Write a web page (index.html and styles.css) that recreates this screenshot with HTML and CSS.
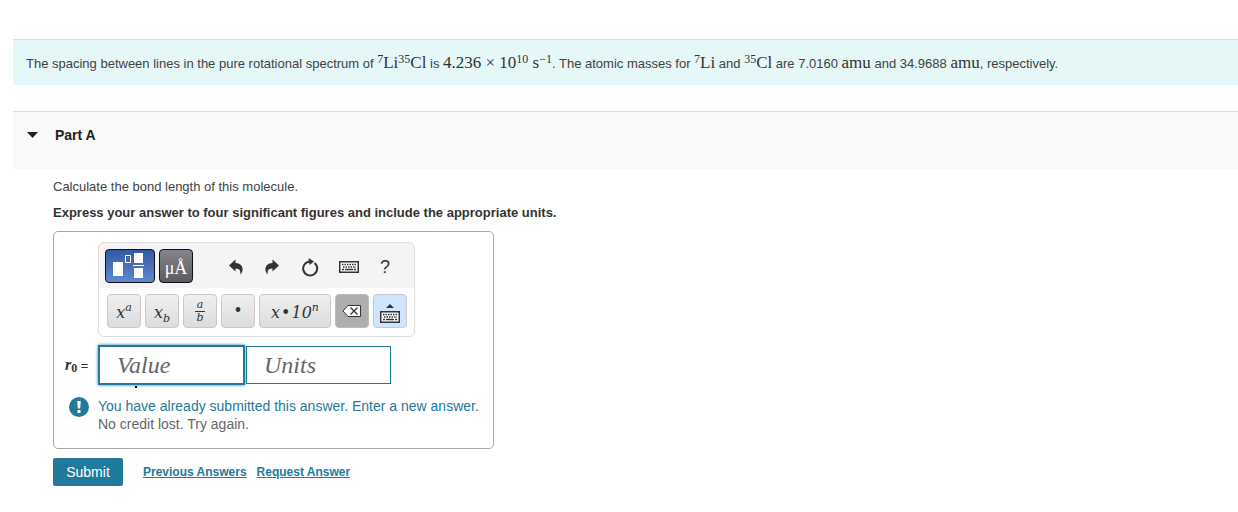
FILE: index.html
```html
<!DOCTYPE html>
<html lang="en">
<head>
<meta charset="utf-8">
<meta name="viewport" content="width=device-width, initial-scale=1">
<title>Part A</title>
<link rel="stylesheet" href="styles.css">
</head>
<body>
<main class="page">
  <p class="intro">The spacing between lines in the pure rotational spectrum of <span class="math"><sup>7</sup>Li<sup>35</sup>Cl</span> is <span class="math">4.236 × 10<sup>10</sup> s<sup>−1</sup></span>. The atomic masses for <span class="math"><sup>7</sup>Li</span> and <span class="math"><sup>35</sup>Cl</span> are 7.0160 <span class="math">amu</span> and 34.9688 <span class="math">amu</span>, respectively.</p>

  <section>
    <h2 class="part-head">
      <button class="part-toggle" type="button" aria-expanded="true">
        <svg class="caret" viewBox="0 0 11 6" aria-hidden="true"><path d="M0 0h11L5.500 6z"/></svg>
        Part A
      </button>
    </h2>

    <form class="part-body">
      <p class="prompt">Calculate the bond length of this molecule.</p>
      <p class="prompt prompt-strong">Express your answer to four significant figures and include the appropriate units.</p>

      <div class="answer">
        <div class="toolbar">
          <div class="tools tools-top">
            <button class="mode mode-active" type="button" aria-label="Templates">
              <svg width="48" height="32" viewBox="0 0 48 32" aria-hidden="true"><path fill="#fff" d="M7 12h10v14H7zM28 3h9v10h-9zM27 15h11v1H27zM28 18h9v10h-9z"/><path fill="none" stroke="#fff" d="M19.500 5.500h5v7h-5z"/></svg>
            </button>
            <button class="mode" type="button">μÅ</button>
            <div class="actions">
              <button class="action" type="button" aria-label="Undo"><svg width="16" height="18" viewBox="0 0 16 18" aria-hidden="true"><path fill="#333" d="M1 7.500L7.500 1.500v3.500C12 5 15.200 8 14.500 12.500c-.3 1.700-1.200 3-2.200 4 .5-3.300-.2-5.800-4.800-6v3z"/></svg></button>
              <button class="action" type="button" aria-label="Redo"><svg width="16" height="18" viewBox="0 0 16 18" aria-hidden="true"><path fill="#333" d="M15 7.500L8.500 1.500v3.500C4 5 .8 8 1.500 12.500c.3 1.700 1.200 3 2.200 4-.5-3.300.2-5.800 4.800-6v3z"/></svg></button>
              <button class="action" type="button" aria-label="Reset"><svg width="18" height="20" viewBox="0 0 18 20" aria-hidden="true"><path fill="none" stroke="#333" stroke-width="2" d="M9 4.500A7 7 0 1 0 13.500 6"/><path fill="#333" d="M7.500 1l5.500 3.500-4.500 3.500z"/></svg></button>
              <button class="action" type="button" aria-label="Keyboard shortcuts"><svg width="20" height="12" viewBox="0 0 20 12" aria-hidden="true"><path fill="#fff" stroke="#333" stroke-width="1.500" d="M.75.75h18.500v10.500H.75z"/><path fill="none" stroke="#333" stroke-width="1.500" stroke-dasharray="1.500 1" d="M3 3.500h14M4 6h13"/><path stroke="#333" stroke-width="1.500" d="M3 8.500h2M6 8.500h8M15 8.500h2"/></svg></button>
              <button class="action action-help" type="button" aria-label="Help">?</button>
            </div>
          </div>
          <div class="tools tools-keys">
            <button class="key" type="button"><i>x<sup>a</sup></i></button>
            <button class="key" type="button"><i>x<sub>b</sub></i></button>
            <button class="key key-plain" type="button"><i class="fraction"><span class="numerator">a</span><span>b</span></i></button>
            <button class="key key-plain" type="button">•</button>
            <button class="key key-wide" type="button"><i>x</i><span class="times">•</span><i>10<sup>n</sup></i></button>
            <button class="key key-plain key-delete" type="button" aria-label="Delete"><svg width="20" height="12" viewBox="0 0 20 12" aria-hidden="true"><path fill="#fff" stroke="#333" d="M6 .5h12.500v11H6L1 6z"/><path fill="none" stroke="#333" stroke-width="1.300" d="M8.500 2.500l7 7M15.500 2.500l-7 7"/></svg></button>
            <button class="key key-keyboard" type="button" aria-label="Show keyboard"><svg width="20" height="20" viewBox="0 0 20 20" aria-hidden="true"><path fill="#333" d="M6 5l4-4 4 4z"/><path fill="#fff" stroke="#333" stroke-width="1.500" d="M.75 8.750h18.500v10.500H.75z"/><path fill="none" stroke="#333" stroke-width="1.500" stroke-dasharray="1.500 1" d="M3 11.500h14M4 14h13"/><path stroke="#333" stroke-width="1.500" d="M3 16.500h2M6 16.500h8M15 16.500h2"/></svg></button>
          </div>
        </div>

        <div class="entry">
          <label class="entry-label" for="value"><span class="variable"><i>r</i><sub>0</sub></span> =</label>
          <span class="value-wrap"><input class="field field-active" id="value" type="text" placeholder="Value"></span>
          <input class="field" type="text" placeholder="Units" aria-label="Units">
        </div>

        <div class="feedback" role="status">
          <svg class="alert" viewBox="0 0 20 20" aria-hidden="true"><circle cx="10" cy="10" r="10" fill="#217a9b"/><path fill="#fff" d="M8.200 4h3.600l-.6 7.500H8.800zM8.500 13h3v3h-3z"/></svg>
          <p class="message">You have already submitted this answer. Enter a new answer.<br><span class="message-note">No credit lost. Try again.</span></p>
        </div>
      </div>

      <div class="footer">
        <button class="submit" type="submit">Submit</button>
        <a class="link" href="#previous">Previous Answers</a>
        <a class="link" href="#request">Request Answer</a>
      </div>
    </form>
  </section>
</main>
</body>
</html>
```

FILE: styles.css
```css
* { box-sizing: border-box; }

body {
  margin: 0;
  background: #fff;
  color: #424242;
  font: 13px/20px "Liberation Sans", Arial, sans-serif;
}

button, input { font-family: inherit; }
button { padding: 0; cursor: pointer; }
p, h2 { margin: 0; }
svg { display: block; }

.page { padding: 39px 0 24px 13px; }

.intro {
  padding: 14px 13px 11px;
  border-top: 1px solid #dadddd;
  background: #e6f7f7;
}

.math {
  font-family: "Liberation Serif", "Times New Roman", serif;
  font-size: 17px;
  line-height: 16px;
  color: #333;
}
.math sup { font-size: 12px; line-height: 0; vertical-align: 5px; }

.part-head {
  margin-top: 26px;
  padding: 13px 14px 24px;
  border-top: 1px solid #dcdcdc;
  background: #f9f9f9;
  line-height: 0;
}
.part-toggle {
  display: flex;
  align-items: center;
  gap: 17px;
  border: 0;
  background: none;
  color: #222;
  font-size: 14px;
  font-weight: bold;
  line-height: 20px;
}
.caret { width: 11px; height: 6px; fill: #222; }

.part-body { padding: 8px 16px 0 40px; }
.prompt { margin-bottom: 6px; }
.prompt-strong { color: #333; font-weight: bold; margin-bottom: 8px; }

.answer {
  width: 441px;
  max-width: 100%;
  padding: 10px 11px 15px;
  border: 1px solid #a9a9a9;
  border-radius: 5px;
}

.toolbar {
  width: 317px;
  margin-left: 33px;
  padding: 1px;
  border: 1px solid #dcdcdc;
  border-radius: 6px;
  background: linear-gradient(#f4f4f4 45px, #fff 45px);
}
.tools { display: flex; gap: 4px; }
.tools-top { padding: 5px; }
.tools-keys { padding: 6px 6px 7px 7px; }

.mode {
  width: 34px;
  height: 34px;
  border: 1px solid #111;
  border-radius: 4px;
  background: linear-gradient(#85838c, #5d5d60);
  color: #fff;
  font: 18px/20px "Liberation Serif", serif;
  padding-top: 4px;
}
.mode-active { width: 50px; padding: 0; background: linear-gradient(#3359a2, #6088cf); }

.actions {
  display: flex;
  flex: 1;
  align-items: center;
  justify-content: space-between;
  padding: 2px 18px 0 31px;
}
.action { border: 0; background: none; color: #333; }
.action-help { font-size: 18px; line-height: 20px; }

.key {
  display: flex;
  align-items: center;
  justify-content: center;
  width: 34px;
  height: 34px;
  padding-top: 3px;
  border: 1px solid #c8c8c8;
  border-radius: 4px;
  background: linear-gradient(#f0f0f0, #dcdcdc);
  color: #333;
  font: 16px/20px "DejaVu Serif", serif;
}
.key-plain { padding-top: 0; }
.key sup, .key sub { font-size: 11px; line-height: 0; }
.key sup { vertical-align: 7px; }
.key-wide { width: 72px; }
.times { padding: 0 1px; }
.key-delete { background: #aeaeae; border-color: #bbb; }
.key-keyboard { background: #cfe5ff; }
.fraction { display: flex; flex-direction: column; font-size: 11px; line-height: 12px; }
.numerator { padding: 0 2px; border-bottom: 1px solid #333; }

.entry { display: flex; align-items: center; margin-top: 8px; }
.entry-label { width: 33px; color: #333; white-space: nowrap; }
.variable {
  font-family: "Liberation Serif", serif;
  font-size: 16px;
  font-weight: bold;
}
.variable sub { font-size: 12px; line-height: 0; vertical-align: -2px; }

.field {
  display: block;
  width: 145px;
  height: 38px;
  padding: 0 17px;
  border: 1px solid #217a9b;
  border-radius: 0;
  outline: 0;
  color: #333;
  font: 24px/34px "Liberation Serif", "Times New Roman", serif;
}
.field::placeholder { color: #666; font-style: italic; opacity: 1; }
.field-active { width: 147px; height: 40px; border-width: 2px; box-shadow: 0 0 3px #217a9b; }
.value-wrap { position: relative; margin-right: 1px; }
.value-wrap::after {
  content: "";
  position: absolute;
  top: 41px;
  left: 37px;
  width: 2px;
  height: 2px;
  background: #000;
}

.feedback { display: flex; gap: 9px; margin-top: 12px; padding-left: 4px; }
.alert { flex: none; width: 20px; height: 20px; }
.message { color: #217a9b; font-size: 14px; line-height: 18px; }
.message-note { color: #666; }

.footer { display: flex; align-items: center; gap: 10px; margin-top: 9px; }
.submit {
  width: 70px;
  height: 28px;
  margin-right: 10px;
  border: 0;
  border-radius: 2px;
  background: #217a9b;
  color: #fff;
  font-size: 14px;
}
.link { color: #217a9b; font-size: 12px; font-weight: bold; text-decoration: underline; }
```
